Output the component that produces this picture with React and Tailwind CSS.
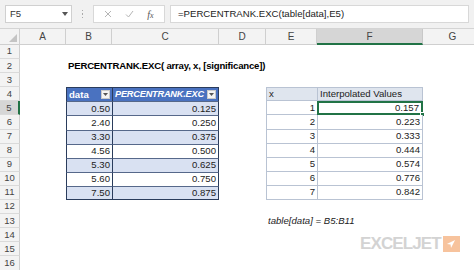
import React from "react";

const COLS = [
  { k: "A", w: 46 },
  { k: "B", w: 46 },
  { k: "C", w: 107 },
  { k: "D", w: 47 },
  { k: "E", w: 51 },
  { k: "F", w: 106 },
  { k: "G", w: 60 },
];

const t1 = [
  ["0.50", "0.125"],
  ["2.40", "0.250"],
  ["3.30", "0.375"],
  ["4.56", "0.500"],
  ["5.30", "0.625"],
  ["5.60", "0.750"],
  ["7.50", "0.875"],
];
const t2 = [
  ["1", "0.157"],
  ["2", "0.223"],
  ["3", "0.333"],
  ["4", "0.444"],
  ["5", "0.574"],
  ["6", "0.776"],
  ["7", "0.842"],
];

function FilterBtn() {
  return (
    <span className="ml-auto mr-[2px] flex h-[9px] w-[9px] shrink-0 items-center justify-center border border-[#c9c9c9] bg-[#f4f4f4]">
      <svg width="5" height="3" viewBox="0 0 5 3">
        <path d="M0 0h5L2.5 3z" fill="#555" />
      </svg>
    </span>
  );
}

function Row({ n, children, sel }) {
  return (
    <div className="flex h-[14.1px]">
      <div
        className={
          "flex w-[20px] shrink-0 items-center justify-center border-b border-[#dadada] text-[9.5px] text-[#444] " +
          (sel ? "border-r-2 border-r-[#217346] bg-[#d6d6d6]" : "border-r border-r-[#cfcfcf] bg-[#f3f3f3]")
        }
      >
        {n}
      </div>
      {children}
    </div>
  );
}

function Empty({ w }) {
  return <div style={{ width: w }} className="shrink-0" />;
}

export default function App() {
  const font = { fontFamily: '"Liberation Sans", Arial, sans-serif' };
  const rows = [];
  for (let r = 1; r <= 16; r++) {
    let cells;
    if (r === 2) {
      cells = (
        <>
          <Empty w={46} />
          <div className="flex w-[400px] shrink-0 items-center pl-[2px] text-[9.6px] font-bold tracking-[-0.2px] text-black whitespace-nowrap">
            PERCENTRANK.EXC( array, x, [significance])
          </div>
        </>
      );
    } else if (r === 4) {
      cells = (
        <>
          <Empty w={46} />
          <div className="flex w-[46px] shrink-0 items-center border-l border-t border-[#2a3c5c] bg-[#4a72c0] pl-[2px] text-[9.6px] font-bold text-white">
            data
            <FilterBtn />
          </div>
          <div className="flex w-[107px] shrink-0 items-center whitespace-nowrap border-l border-r border-t border-[#2a3c5c] bg-[#4a72c0] pl-[2px] text-[9.2px] font-bold italic tracking-[-0.2px] text-white">
            PERCENTRANK.EXC
            <FilterBtn />
          </div>
          <Empty w={47} />
          <div className="flex w-[51px] shrink-0 items-center border-l border-t border-b border-[#b9c3d3] bg-[#dfe5ee] pl-[2px] text-[9.6px] text-[#222]">
            x
          </div>
          <div className="flex w-[106px] shrink-0 items-center border-l border-r border-t border-b border-[#b9c3d3] bg-[#dfe5ee] pl-[2px] text-[9.6px] text-[#222]">
            Interpolated Values
          </div>
        </>
      );
    } else if (r >= 5 && r <= 11) {
      const i = r - 5;
      const band = i % 2 === 0 ? "bg-[#d9e1f2]" : "bg-white";
      const last = r === 11;
      cells = (
        <>
          <Empty w={46} />
          <div
            className={
              "flex w-[46px] shrink-0 items-center justify-end border-l border-t border-l-[#2a3c5c] border-t-[#56688a] pr-[2px] text-[9.6px] text-[#222] " +
              band +
              (last ? " border-b border-b-[#2a3c5c]" : "")
            }
          >
            {t1[i][0]}
          </div>
          <div
            className={
              "flex w-[107px] shrink-0 items-center justify-end border-l border-r border-t border-l-[#2a3c5c] border-r-[#2a3c5c] border-t-[#56688a] pr-[2px] text-[9.6px] text-[#222] " +
              band +
              (last ? " border-b border-b-[#2a3c5c]" : "")
            }
          >
            {t1[i][1]}
          </div>
          <Empty w={47} />
          <div className="flex w-[51px] shrink-0 items-center justify-end border-l border-b border-[#b9c3d3] bg-white pr-[2px] text-[9.6px] text-[#222]">
            {t2[i][0]}
          </div>
          <div
            className={
              "relative flex w-[106px] shrink-0 items-center justify-end pr-[2px] text-[9.6px] text-[#222] " +
              (r === 5
                ? "border-2 border-[#217346] bg-white"
                : "border-l border-r border-b border-[#b9c3d3] bg-white")
            }
          >
            {t2[i][1]}
            {r === 5 && (
              <span className="absolute -bottom-[4px] -right-[4px] h-[5px] w-[5px] border border-white bg-[#217346]" />
            )}
          </div>
        </>
      );
    } else if (r === 13) {
      cells = (
        <>
          <Empty w={246} />
          <div className="flex shrink-0 items-center pl-[2px] text-[9.6px] italic text-[#222] whitespace-nowrap">
            table[data] = B5:B11
          </div>
        </>
      );
    } else {
      cells = null;
    }
    rows.push(
      <Row key={r} n={r} sel={r === 5}>
        {cells}
      </Row>
    );
  }

  return (
    <div style={font} className="relative h-[270px] w-[474px] overflow-hidden bg-white">
      {/* formula bar */}
      <div className="flex h-[29px] items-center border-b border-[#d4d4d4] bg-[#f1f1f1] px-[5px]">
        <div className="flex h-[18px] w-[67px] items-center border border-[#d0d0d0] bg-white pl-[4px] text-[9.5px] text-[#333]">
          F5
          <svg className="ml-auto mr-[3px]" width="6" height="4" viewBox="0 0 6 4">
            <path d="M0 0h6L3 4z" fill="#555" />
          </svg>
        </div>
        <div className="flex w-[21px] flex-col items-center justify-center gap-[2px]">
          <span className="h-[1.5px] w-[1.5px] bg-[#aaa]" />
          <span className="h-[1.5px] w-[1.5px] bg-[#aaa]" />
          <span className="h-[1.5px] w-[1.5px] bg-[#aaa]" />
        </div>
        <div className="flex h-[18px] w-[72px] items-center justify-around border border-[#d8d8d8] bg-white px-[4px]">
          <svg width="8" height="8" viewBox="0 0 8 8">
            <path d="M1 1l6 6M7 1L1 7" stroke="#b5b5b5" strokeWidth="1" />
          </svg>
          <svg width="9" height="8" viewBox="0 0 9 8">
            <path d="M1 4.5l2.5 2.5L8 1" stroke="#b5b5b5" strokeWidth="1" fill="none" />
          </svg>
          <span
            className="text-[10px] italic text-[#555]"
            style={{ fontFamily: '"Liberation Serif", serif' }}
          >
            f<span className="text-[8px]">x</span>
          </span>
        </div>
        <div className="ml-[5px] flex h-[18px] flex-1 items-center border border-[#d8d8d8] bg-white pl-[7px] text-[9.6px] text-[#222] whitespace-nowrap">
          =PERCENTRANK.EXC(table[data],E5)
        </div>
      </div>

      {/* column header */}
      <div className="flex h-[16px] bg-[#f3f3f3]">
        <div className="relative w-[20px] shrink-0 border-b border-r border-[#cfcfcf]">
          <svg className="absolute bottom-[2px] right-[2px]" width="8" height="8" viewBox="0 0 8 8">
            <path d="M8 0V8H0z" fill="#c4c4c4" />
          </svg>
        </div>
        {COLS.map((c) => (
          <div
            key={c.k}
            style={{ width: c.w }}
            className={
              "flex shrink-0 items-center justify-center border-r text-[10px] text-[#444] " +
              (c.k === "F"
                ? "border-b-2 border-b-[#217346] border-r-[#c8c8c8] bg-[#d6d6d6]"
                : "border-b border-[#cfcfcf]")
            }
          >
            {c.k}
          </div>
        ))}
      </div>

      {rows}

      {/* watermark logo */}
      <div className="absolute left-[360px] top-[235px] flex items-center gap-[2px]">
        <span
          className="text-[17px] font-bold leading-none tracking-[-0.9px] text-[#d3d3d3]"
          style={{ fontFamily: '"Liberation Sans", Arial, sans-serif' }}
        >
          EXCELJET
        </span>
        <span className="flex h-[16px] w-[17px] items-center justify-center bg-[#f7c39d]">
          <svg width="10" height="10" viewBox="0 0 11 11">
            <path d="M10 1L1 5.5 5 6 5.5 10z" fill="white" />
          </svg>
        </span>
      </div>
    </div>
  );
}
